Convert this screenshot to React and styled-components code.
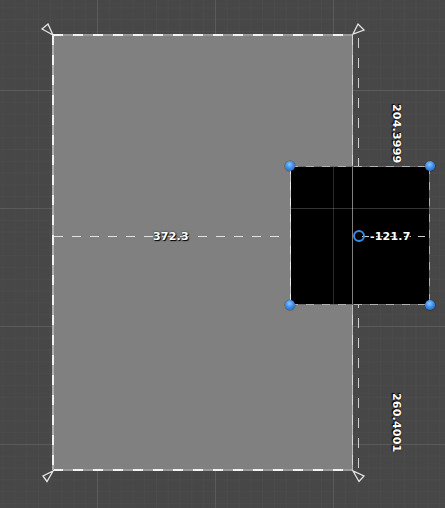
import React from 'react'
import styled, { createGlobalStyle, css } from 'styled-components'

const GlobalStyle = createGlobalStyle`
  html, body {
    margin: 0;
    padding: 0;
    background: #474747;
  }
  body {
    font-family: 'DejaVu Sans', Verdana, sans-serif;
  }
`

// scene view with the big and small editor grid
const Scene = styled.div`
  position: relative;
  box-sizing: border-box;
  width: 445px;
  height: 508px;
  padding: 35px 0 0 53px;
  overflow: hidden;
  background-color: #474747;
  background-image:
    linear-gradient(to right, rgba(255, 255, 255, 0.09) 1px, transparent 1px),
    linear-gradient(to bottom, rgba(255, 255, 255, 0.09) 1px, transparent 1px),
    linear-gradient(to right, rgba(255, 255, 255, 0.018) 1px, transparent 1px),
    linear-gradient(to bottom, rgba(255, 255, 255, 0.018) 1px, transparent 1px);
  background-size: 118px 118px, 118px 118px, 11.8px 11.8px, 11.8px 11.8px;
  background-position: 97px 0, 0 90px, 97px 0, 0 90px;
`

const dashed = (dir, a, b, len) => css`
  background-image: repeating-linear-gradient(
    ${dir},
    ${a} 0 ${len}px,
    ${b} ${len}px ${len * 2}px
  );
`

const ParentRect = styled.div`
  position: relative;
  width: 299px;
  height: 435px;
  background: #808080;
`

// one side of a rect outline, drawn as a dashed strip
const Edge = styled.div`
  position: absolute;
  ${(p) =>
    p.$side === 'top' || p.$side === 'bottom'
      ? css`
          left: 0;
          right: 0;
          height: ${p.$t || 1}px;
          ${p.$side}: ${p.$off || 0}px;
          ${dashed('to right', p.$a, p.$b, p.$len || 10)}
        `
      : css`
          top: 0;
          bottom: 0;
          width: ${p.$t || 1}px;
          ${p.$side}: ${p.$off || 0}px;
          ${dashed('to bottom', p.$a, p.$b, p.$len || 10)}
        `}
`

const Guide = styled.div`
  position: absolute;
  ${(p) =>
    p.$vertical
      ? css`
          left: ${p.$at}px;
          top: ${p.$from}px;
          width: 1px;
          height: ${p.$size}px;
          ${dashed('to bottom', p.$color, 'transparent', p.$len)}
        `
      : css`
          top: ${p.$at}px;
          left: ${p.$from}px;
          height: 1px;
          width: ${p.$size}px;
          ${dashed('to right', p.$color, 'transparent', p.$len)}
        `}
`

const ChildRect = styled.div`
  position: absolute;
  left: 237px;
  top: 131px;
  width: 140px;
  height: 139px;
  background-color: #000;
  background-image:
    linear-gradient(to right, transparent 43px, rgba(255, 255, 255, 0.16) 43px, rgba(255, 255, 255, 0.16) 44px, transparent 44px),
    linear-gradient(to right, transparent 62px, rgba(255, 255, 255, 0.5) 62px, rgba(255, 255, 255, 0.5) 63px, transparent 63px),
    linear-gradient(to bottom, transparent 42px, rgba(255, 255, 255, 0.2) 42px, rgba(255, 255, 255, 0.2) 43px, transparent 43px);
`

const Handle = styled.div`
  position: absolute;
  ${(p) => p.$v}: -5px;
  ${(p) => p.$h}: -5px;
  width: 10px;
  height: 10px;
  border-radius: 50%;
  background: radial-gradient(circle at 45% 35%, #8cc4ff 0, #3d8ee8 45%, #1d5cb8 100%);
  box-shadow: 0 0 0 0.5px rgba(0, 0, 0, 0.4);
`

const Pivot = styled.div`
  position: absolute;
  left: 63px;
  top: 64px;
  width: 8px;
  height: 8px;
  border: 2px solid #3b8ae6;
  border-radius: 50%;
`

const Label = styled.span`
  position: absolute;
  left: ${(p) => p.$x}px;
  top: ${(p) => p.$y}px;
  font-family: 'DejaVu Sans', Verdana, sans-serif;
  font-weight: bold;
  font-size: 11px;
  line-height: 13px;
  letter-spacing: 0.2px;
  color: #fff;
  white-space: nowrap;
  text-shadow: 1px 1px 1px #000, 0 0 2px rgba(0, 0, 0, 0.8);
  ${(p) =>
    p.$vertical &&
    css`
      writing-mode: vertical-rl;
      text-shadow: -1px 1px 1px #000, 0 0 2px rgba(0, 0, 0, 0.8);
    `}
`

const Marker = styled.svg`
  position: absolute;
  ${(p) => p.$v}: -12px;
  ${(p) => p.$h}: ${(p) => p.$hOff}px;
  overflow: visible;
`

const anchorMarks = [
  { v: 'top', h: 'left', off: -12, points: '1,6 7,1 12,12' },
  { v: 'top', h: 'right', off: -13, points: '2,11 7,1 13,7' },
  { v: 'bottom', h: 'left', off: -12, points: '2,8 6,13.5 12,3' },
  { v: 'bottom', h: 'right', off: -13, points: '2,3 8,13.5 13,8' },
]

const handles = [
  ['top', 'left'],
  ['top', 'right'],
  ['bottom', 'left'],
  ['bottom', 'right'],
]

export default function App() {
  return (
    <>
      <GlobalStyle />
      <Scene>
        <ParentRect>
          <Edge $side="top" $off={-1} $t={2} $a="#f2f2f2" $b="#9a9a9a" />
          <Edge $side="bottom" $off={-1} $t={2} $a="#f2f2f2" $b="#9a9a9a" />
          <Edge $side="left" $off={-1} $t={2} $a="#f2f2f2" $b="#b0b0b0" />
          <Edge $side="right" $off={-1} $a="#d8d8d8" $b="#bdbdbd" />

          <Guide $vertical $at={305} $from={3} $size={434} $color="#cfcfcf" $len={10} />
          <Guide $at={201} $from={1} $size={234} $color="#e0e0e0" $len={9} />

          {anchorMarks.map((m) => (
            <Marker
              key={m.v + m.h}
              $v={m.v}
              $h={m.h}
              $hOff={m.off}
              width="14"
              height="14"
              viewBox="0 0 14 14"
            >
              <polygon
                points={m.points}
                fill="none"
                stroke="#e6e6e6"
                strokeWidth="1.3"
              />
            </Marker>
          ))}

          <ChildRect>
            <Edge $side="top" $a="#b0b0b0" $b="#6a6a6a" $len={8} />
            <Edge $side="bottom" $a="#b0b0b0" $b="#6a6a6a" $len={8} />
            <Edge $side="left" $a="#e8e8e8" $b="#c8c8c8" $len={8} />
            <Edge $side="right" $a="#b0b0b0" $b="#6a6a6a" $len={8} />
            <Guide $at={70} $from={72} $size={68} $color="#cfcfcf" $len={7} />
            {handles.map(([v, h]) => (
              <Handle key={v + h} $v={v} $h={h} />
            ))}
            <Pivot />
          </ChildRect>

          <Label $x={100} $y={195}>372.3</Label>
          <Label $x={317} $y={195}>-121.7</Label>
          <Label $x={337} $y={69} $vertical>204.3999</Label>
          <Label $x={337} $y={358} $vertical>260.4001</Label>
        </ParentRect>
      </Scene>
    </>
  )
}
